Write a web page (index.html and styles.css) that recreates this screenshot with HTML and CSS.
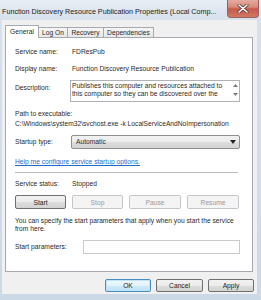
FILE: index.html
```html
<!DOCTYPE html>
<html>
<head>
<meta charset="utf-8">
<link rel="stylesheet" href="styles.css">
</head>
<body>
<div class="window">
  <div class="titlebar">
    <span class="title">Function Discovery Resource Publication Properties (Local Comp...</span>
    <div class="close">
      <svg width="12" height="9" viewBox="0 0 12 9"><path d="M2 1 L10 8 M10 1 L2 8" stroke="#5a3a3a" stroke-width="3" stroke-linecap="round"/><path d="M2 1 L10 8 M10 1 L2 8" stroke="#ffffff" stroke-width="1.6" stroke-linecap="round"/></svg>
    </div>
  </div>
  <div class="client">
    <div class="tabs">
      <div class="tab selected">General</div>
      <div class="tab">Log On</div>
      <div class="tab">Recovery</div>
      <div class="tab">Dependencies</div>
    </div>
    <div class="panel">
      <div class="row r-service"><span class="label">Service name:</span><span class="value">FDResPub</span></div>
      <div class="row r-display"><span class="label">Display name:</span><span class="value">Function Discovery Resource Publication</span></div>
      <div class="row r-desc">
        <span class="label desc-label">Description:</span>
        <div class="descbox">
          <div class="desctext">Publishes this computer and resources attached to this computer so they can be discovered over the</div>
          <div class="scroll">
            <svg width="5" height="3" viewBox="0 0 5 3"><path d="M0 3 L2.5 0 L5 3 Z" fill="#7a7a7a"/></svg>
            <svg width="5" height="3" viewBox="0 0 5 3"><path d="M0 0 L2.5 3 L5 0 Z" fill="#7a7a7a"/></svg>
          </div>
        </div>
      </div>
      <div class="row r-path">Path to executable:</div>
      <div class="row r-pathval">C:\Windows\system32\svchost.exe -k LocalServiceAndNoImpersonation</div>
      <div class="row r-startup">
        <span class="label">Startup type:</span>
        <div class="select"><span>Automatic</span><svg width="6" height="4" viewBox="0 0 6 4"><path d="M0 0 L6 0 L3 4 Z" fill="#222"/></svg></div>
      </div>
      <div class="row r-link"><span class="link">Help me configure service startup options.</span></div>
      <div class="sep"></div>
      <div class="row r-status"><span class="label">Service status:</span><span class="value">Stopped</span></div>
      <div class="svc-buttons">
        <div class="btn">Start</div>
        <div class="btn disabled">Stop</div>
        <div class="btn disabled wide">Pause</div>
        <div class="btn disabled wide">Resume</div>
      </div>
      <div class="para">You can specify the start parameters that apply when you start the service from here.</div>
      <div class="row r-params">
        <span class="label plabel">Start parameters:</span>
        <div class="input"></div>
      </div>
    </div>
    <div class="footer">
      <div class="btn fbtn default">OK</div>
      <div class="btn fbtn cancel">Cancel</div>
      <div class="btn fbtn">Apply</div>
    </div>
  </div>
</div>
</body>
</html>
```
FILE: styles.css
```css
* { box-sizing: border-box; }
html, body { margin: 0; padding: 0; }
body {
  width: 261px;
  height: 300px;
  overflow: hidden;
  font-family: "Liberation Sans", Arial, sans-serif;
  font-size: 6.7px;
  color: #2a2a2a;
  background: #c9d6e4;
}
.window {
  width: 261px;
  height: 300px;
  display: flex;
  flex-direction: column;
  background: linear-gradient(to bottom, #dfe7f0 0px, #d6e1ec 20px, #cbd9e7 100%);
}
.titlebar {
  height: 20px;
  flex: none;
  display: flex;
  align-items: flex-start;
  background: linear-gradient(to bottom, #e8eef4 0px, #dee7f0 10px, #d6e1ec 20px);
}
.title {
  padding-left: 2px;
  padding-top: 7px;
  font-size: 7.2px;
  color: #1a1a1a;
  white-space: nowrap;
  flex: 1;
  overflow: hidden;
}
.close {
  width: 32px;
  height: 18px;
  margin-right: 2px;
  flex: none;
  border: 1px solid #9a6060;
  border-top: none;
  border-radius: 0 0 4px 4px;
  background: linear-gradient(to bottom, #e6aaa0 0px, #d88a7c 7px, #c8584a 9px, #d47c66 18px);
  display: flex;
  align-items: center;
  justify-content: center;
}
.client {
  flex: 1;
  margin: 0 4px 6px 2px;
  background: #f0f0f0;
  padding-top: 5px;
  display: flex;
  flex-direction: column;
}
.tabs {
  display: flex;
  align-items: flex-end;
  padding-left: 3px;
  height: 12px;
  position: relative;
  z-index: 1;
}
.tab {
  height: 10px;
  line-height: 9px;
  border: 1px solid #a6aab0;
  border-bottom: none;
  border-left: none;
  background: linear-gradient(to bottom, #f5f5f5, #e8e8e8);
  text-align: center;
  color: #2a2a2a;
}
.tab:nth-child(2) { width: 29px; }
.tab:nth-child(3) { width: 36px; }
.tab:nth-child(4) { width: 50px; }
.tab.selected {
  width: 34px;
  height: 13px;
  line-height: 11px;
  margin-bottom: -1px;
  background: #ffffff;
  border-left: 1px solid #a6aab0;
}
.panel {
  margin: 0 0 0 3px;
  width: 248px;
  height: 235px;
  background: #ffffff;
  border: 1px solid #a6aab0;
  padding: 0 12px 0 9px;
  flex: none;
}
.row {
  display: flex;
  align-items: center;
  height: 10px;
  line-height: 10px;
  white-space: nowrap;
}
.label { width: 57px; flex: none; }
.r-service { margin-top: 9px; }
.r-display { margin-top: 7px; }
.r-desc {
  margin-top: 6px;
  height: 22px;
  align-items: flex-start;
}
.desc-label { width: 55px; margin-top: 3px; }
.descbox {
  width: 170px;
  height: 22px;
  border: 1px solid #b0b2b8;
  display: flex;
}
.desctext {
  flex: 1;
  white-space: normal;
  line-height: 7.8px;
  padding: 1px 0 0 1px;
  overflow: hidden;
}
.scroll {
  width: 7px;
  flex: none;
  display: flex;
  flex-direction: column;
  justify-content: space-between;
  align-items: center;
  padding: 3px 0 5px;
}
.r-path { margin-top: 7px; }
.r-pathval { margin-top: 0; }
.r-startup { margin-top: 6px; height: 14px; }
.select {
  width: 169px;
  height: 14px;
  border: 1px solid #8e8f8f;
  border-radius: 2px;
  background: linear-gradient(to bottom, #f2f2f2 0%, #ebebeb 50%, #dddddd 51%, #d3d3d3 100%);
  display: flex;
  align-items: center;
  justify-content: space-between;
  padding: 0 3px 0 4px;
  margin-left: -1px;
}
.r-link { margin-top: 8px; }
.link { color: #1a6ec8; text-decoration: underline; }
.sep {
  margin-top: 5px;
  height: 1px;
  width: 223px;
  background: #bcbcbc;
}
.r-status { margin-top: 6px; }
.svc-buttons {
  margin-top: 6px;
  display: flex;
  gap: 6px;
}
.btn {
  width: 51px;
  height: 14px;
  border: 1px solid #707070;
  border-radius: 2px;
  background: linear-gradient(to bottom, #f2f2f2 0%, #ebebeb 50%, #dddddd 51%, #d3d3d3 100%);
  display: flex;
  align-items: center;
  justify-content: center;
  color: #1e1e1e;
}
.btn.wide { width: 52px; }
.btn.disabled {
  border-color: #c4c7ca;
  background: #f4f4f4;
  color: #9a9a9a;
}
.para {
  margin-top: 8px;
  line-height: 8.4px;
  width: 225px;
}
.r-params { margin-top: 6px; height: 14px; }
.plabel { width: 68px; }
.input {
  width: 157px;
  height: 14px;
  border: 1px solid #c8cace;
  background: #ffffff;
}
.footer {
  display: flex;
  justify-content: flex-end;
  gap: 5px;
  padding: 7px 3px 0 0;
}
.fbtn { width: 46px; height: 13px; }
.fbtn.cancel { width: 47px; }
.fbtn.default {
  border-color: #4a8cc0;
  box-shadow: inset 0 0 0 1px #bfe4f6;
  background: linear-gradient(to bottom, #eef7fd 0%, #e2f3fc 50%, #cdebfb 51%, #bde2f6 100%);
}
```
